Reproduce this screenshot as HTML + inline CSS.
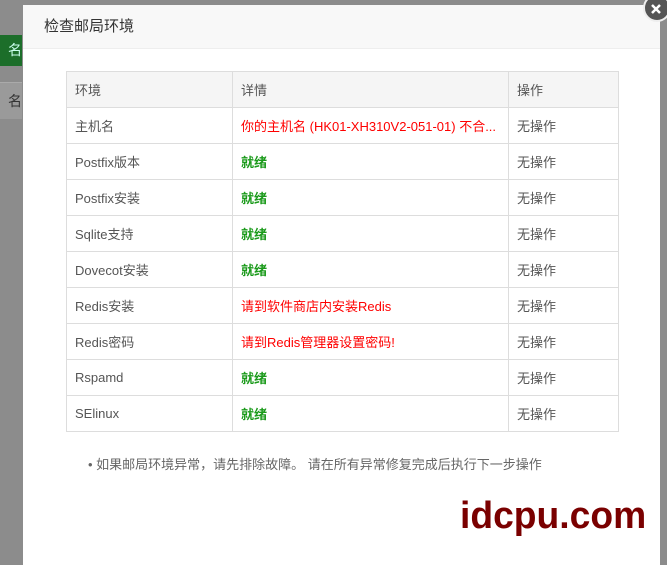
<!DOCTYPE html>
<html><head><meta charset="utf-8"><style>
body{margin:0;width:667px;height:555px;overflow:hidden;background:#8c8c8c;font-family:"Liberation Sans","Noto Sans CJK SC",sans-serif;position:relative}
.bgbtn{position:absolute;left:0;top:35px;width:22px;height:31px;background:#1c6e2a;color:#cfe;font-size:14px;line-height:31px;text-align:right}
.bgline{position:absolute;left:0;top:82px;width:22px;height:36px;background:#9a9a9a;border-top:1px solid #aaa;color:#333;font-size:14px;line-height:36px;text-align:right}
.modal{position:absolute;left:23px;top:5px;width:637px;height:560px;background:#fff}
.hd{height:43px;background:#f8f8f8;border-bottom:1px solid #eee;font-size:15px;color:#333;line-height:44px;padding-left:21px}
table{position:absolute;left:43px;top:66px;border-collapse:collapse;width:553px;font-size:13px;color:#555}
td{border:1px solid #ddd;height:35px;padding:0 0 0 8px}
tr.h td{background:#f5f5f5}
.r{color:#f00}.g{color:#1a9a1a;font-weight:bold}
.note{position:absolute;left:65px;top:449px;font-size:13px;color:#666}
.wm{position:absolute;left:437px;top:490px;font-size:38px;font-weight:bold;color:#7a0000;transform:scaleX(0.98);transform-origin:0 0;white-space:nowrap}
.close{position:absolute;left:643px;top:-6px;width:28px;height:28px;border-radius:50%;background:#555;border:2px solid #eee;box-sizing:border-box}
</style></head><body>
<div class="bgbtn">名</div>
<div class="bgline">名</div>
<div class="modal">
<div class="hd">检查邮局环境</div>
<table>
<col style="width:166px"><col style="width:276px"><col>
<tr class="h"><td>环境</td><td>详情</td><td>操作</td></tr>
<tr><td>主机名</td><td class="r">你的主机名 (HK01-XH310V2-051-01) 不合...</td><td>无操作</td></tr>
<tr><td>Postfix版本</td><td class="g">就绪</td><td>无操作</td></tr>
<tr><td>Postfix安装</td><td class="g">就绪</td><td>无操作</td></tr>
<tr><td>Sqlite支持</td><td class="g">就绪</td><td>无操作</td></tr>
<tr><td>Dovecot安装</td><td class="g">就绪</td><td>无操作</td></tr>
<tr><td>Redis安装</td><td class="r">请到软件商店内安装Redis</td><td>无操作</td></tr>
<tr><td>Redis密码</td><td class="r">请到Redis管理器设置密码!</td><td>无操作</td></tr>
<tr><td>Rspamd</td><td class="g">就绪</td><td>无操作</td></tr>
<tr><td>SElinux</td><td class="g">就绪</td><td>无操作</td></tr>
</table>
<div class="note">• 如果邮局环境异常，请先排除故障。 请在所有异常修复完成后执行下一步操作</div>
<div class="wm">idcpu.com</div>
</div>
<div class="close"><svg width="24" height="24" viewBox="0 0 24 24"><path d="M7 9L15 17M15 9L7 17" stroke="#fff" stroke-width="2.5"/></svg></div>
</body></html>
